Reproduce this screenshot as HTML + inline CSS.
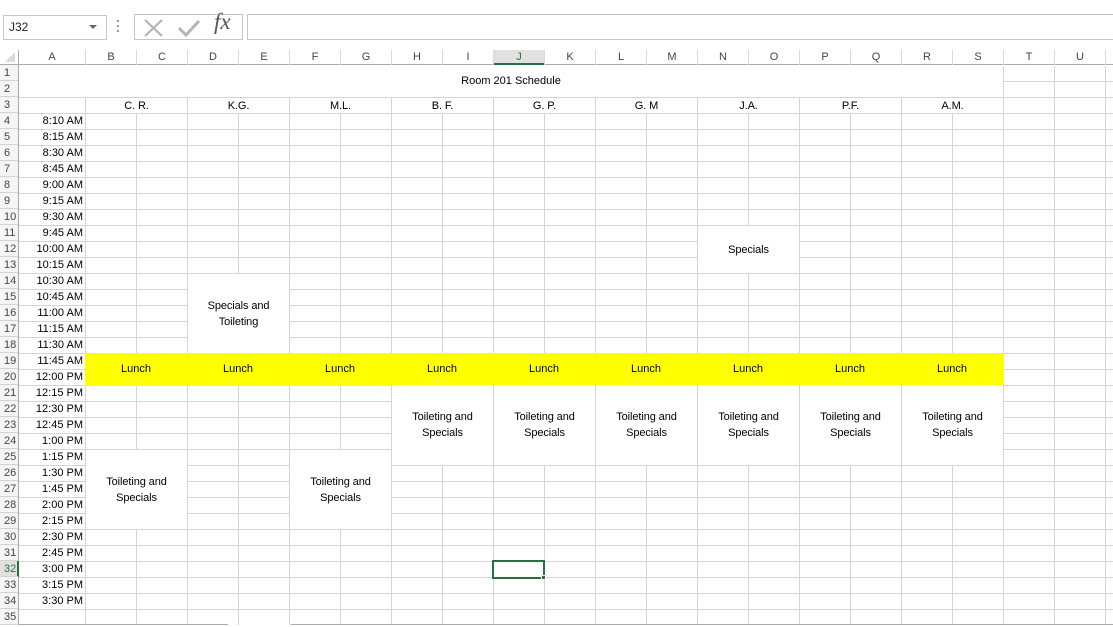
<!DOCTYPE html>
<html><head><meta charset="utf-8"><style>
*{margin:0;padding:0;box-sizing:border-box}
body{width:1113px;height:627px;background:#fff;position:relative;overflow:hidden;font-family:"Liberation Sans",Arial,sans-serif;font-size:11px;color:#000}
.a{position:absolute}
.ch{position:absolute;top:50px;height:15px;line-height:15px;text-align:center;color:#444;font-size:11px;border-right:1px solid #dadada}
.rn{position:absolute;left:0;width:19px;height:16px;line-height:16px;padding-left:4px;color:#444;font-size:11px}
.tm{position:absolute;left:19px;width:64px;height:16px;line-height:17px;text-align:right;font-size:11px}
.bx{position:absolute;background:#fff;border:1px solid #d4d4d4;display:flex;align-items:center;justify-content:center;text-align:center;line-height:16px;font-size:11px;letter-spacing:-0.1px}
.ly{position:absolute;top:353px;height:33px;line-height:33px;text-align:center;width:102px}
</style></head><body>
<div class="a" style="left:3px;top:15px;width:104px;height:25px;border:1px solid #c6c6c6"></div>
<div class="a" style="left:9px;top:15px;line-height:25px;font-size:12px;color:#222">J32</div>
<div class="a" style="left:89px;top:25px;width:0;height:0;border-left:4px solid transparent;border-right:4px solid transparent;border-top:4px solid #666"></div>
<div class="a" style="left:117px;top:20px;width:2px;height:2px;background:#999;box-shadow:0 5px 0 #999,0 10px 0 #999"></div>
<div class="a" style="left:134px;top:14px;width:109px;height:26px;border:1px solid #c6c6c6"></div>
<svg class="a" style="left:141px;top:17px" width="26" height="22"><path d="M4 3 L21 19 M21 3 L4 19" stroke="#b4b4b4" stroke-width="2.2" fill="none"/></svg>
<svg class="a" style="left:176px;top:17px" width="26" height="22"><path d="M3 11 L10 18 L23 4" stroke="#b4b4b4" stroke-width="3" fill="none"/></svg>
<div class="a" style="left:214px;top:9px;font-family:'Liberation Serif',serif;font-style:italic;font-size:23px;color:#555">fx</div>
<div class="a" style="left:247px;top:14px;width:870px;height:26px;border:1px solid #c6c6c6"></div>
<div class="a" style="left:0;top:49px;width:1113px;height:16px;border-bottom:1px solid #ababab"></div>
<div class="a" style="left:5px;top:52px;width:0;height:0;border-left:10px solid transparent;border-bottom:10px solid #dcdcdc"></div>
<div class="a" style="left:493px;top:50px;width:51px;height:15px;background:#e1e1e1;border-bottom:2px solid #217346"></div>
<div class="ch" style="left:19px;width:67px">A</div>
<div class="ch" style="left:86px;width:51px">B</div>
<div class="ch" style="left:137px;width:51px">C</div>
<div class="ch" style="left:188px;width:51px">D</div>
<div class="ch" style="left:239px;width:51px">E</div>
<div class="ch" style="left:290px;width:51px">F</div>
<div class="ch" style="left:341px;width:51px">G</div>
<div class="ch" style="left:392px;width:51px">H</div>
<div class="ch" style="left:443px;width:51px">I</div>
<div class="ch" style="left:494px;width:51px;color:#217346">J</div>
<div class="ch" style="left:545px;width:51px">K</div>
<div class="ch" style="left:596px;width:51px">L</div>
<div class="ch" style="left:647px;width:51px">M</div>
<div class="ch" style="left:698px;width:51px">N</div>
<div class="ch" style="left:749px;width:51px">O</div>
<div class="ch" style="left:800px;width:51px">P</div>
<div class="ch" style="left:851px;width:51px">Q</div>
<div class="ch" style="left:902px;width:51px">R</div>
<div class="ch" style="left:953px;width:51px">S</div>
<div class="ch" style="left:1004px;width:51px">T</div>
<div class="ch" style="left:1055px;width:51px">U</div>
<div class="a" style="left:18px;top:50px;width:1px;height:577px;background:#ababab"></div>
<div class="a" style="left:19px;top:66px;width:1094px;height:559px;background:repeating-linear-gradient(to bottom,transparent 0 15px,#d4d4d4 15px 16px)"></div>
<div class="a" style="left:35px;top:66px;width:1078px;height:559px;background:repeating-linear-gradient(to right,transparent 0 50px,#d4d4d4 50px 51px)"></div>
<div class="a" style="left:0;top:624px;width:228px;height:1px;background:#ababab"></div>
<div class="a" style="left:291px;top:624px;width:822px;height:1px;background:#ababab"></div>
<div class="a" style="left:0;top:625px;width:1113px;height:2px;background:#fff"></div>
<div class="a" style="left:0;top:65px;width:18px;height:560px;background:#f5f5f5"></div>
<div class="rn" style="top:65px">1</div><div class="rn" style="top:81px">2</div><div class="rn" style="top:97px">3</div><div class="rn" style="top:113px">4</div><div class="rn" style="top:129px">5</div><div class="rn" style="top:145px">6</div><div class="rn" style="top:161px">7</div><div class="rn" style="top:177px">8</div><div class="rn" style="top:193px">9</div><div class="rn" style="top:209px">10</div><div class="rn" style="top:225px">11</div><div class="rn" style="top:241px">12</div><div class="rn" style="top:257px">13</div><div class="rn" style="top:273px">14</div><div class="rn" style="top:289px">15</div><div class="rn" style="top:305px">16</div><div class="rn" style="top:321px">17</div><div class="rn" style="top:337px">18</div><div class="rn" style="top:353px">19</div><div class="rn" style="top:369px">20</div><div class="rn" style="top:385px">21</div><div class="rn" style="top:401px">22</div><div class="rn" style="top:417px">23</div><div class="rn" style="top:433px">24</div><div class="rn" style="top:449px">25</div><div class="rn" style="top:465px">26</div><div class="rn" style="top:481px">27</div><div class="rn" style="top:497px">28</div><div class="rn" style="top:513px">29</div><div class="rn" style="top:529px">30</div><div class="rn" style="top:545px">31</div>
<div class="rn" style="top:561px;background:#e1e1e1;color:#217346;border-right:2px solid #217346">32</div>
<div class="rn" style="top:577px">33</div><div class="rn" style="top:593px">34</div><div class="rn" style="top:609px">35</div>
<div class="a" style="left:0;top:80px;width:18px;height:545px;background:repeating-linear-gradient(to bottom,#d4d4d4 0 1px,transparent 1px 16px)"></div>
<div class="tm" style="top:113px">8:10 AM</div><div class="tm" style="top:129px">8:15 AM</div><div class="tm" style="top:145px">8:30 AM</div><div class="tm" style="top:161px">8:45 AM</div><div class="tm" style="top:177px">9:00 AM</div><div class="tm" style="top:193px">9:15 AM</div><div class="tm" style="top:209px">9:30 AM</div><div class="tm" style="top:225px">9:45 AM</div><div class="tm" style="top:241px">10:00 AM</div><div class="tm" style="top:257px">10:15 AM</div><div class="tm" style="top:273px">10:30 AM</div><div class="tm" style="top:289px">10:45 AM</div><div class="tm" style="top:305px">11:00 AM</div><div class="tm" style="top:321px">11:15 AM</div><div class="tm" style="top:337px">11:30 AM</div><div class="tm" style="top:353px">11:45 AM</div><div class="tm" style="top:369px">12:00 PM</div><div class="tm" style="top:385px">12:15 PM</div><div class="tm" style="top:401px">12:30 PM</div><div class="tm" style="top:417px">12:45 PM</div><div class="tm" style="top:433px">1:00 PM</div><div class="tm" style="top:449px">1:15 PM</div><div class="tm" style="top:465px">1:30 PM</div><div class="tm" style="top:481px">1:45 PM</div><div class="tm" style="top:497px">2:00 PM</div><div class="tm" style="top:513px">2:15 PM</div><div class="tm" style="top:529px">2:30 PM</div><div class="tm" style="top:545px">2:45 PM</div><div class="tm" style="top:561px">3:00 PM</div><div class="tm" style="top:577px">3:15 PM</div><div class="tm" style="top:593px">3:30 PM</div>
<div class="a" style="left:19px;top:66px;width:985px;height:32px;background:#fff;border-right:1px solid #d4d4d4;border-bottom:1px solid #d4d4d4;text-align:center;line-height:31px;font-size:11px">Room 201 Schedule</div>
<div class="bx" style="left:85px;top:97px;width:103px;height:17px">C. R.</div>
<div class="bx" style="left:187px;top:97px;width:103px;height:17px">K.G.</div>
<div class="bx" style="left:289px;top:97px;width:103px;height:17px">M.L.</div>
<div class="bx" style="left:391px;top:97px;width:103px;height:17px">B. F.</div>
<div class="bx" style="left:493px;top:97px;width:103px;height:17px">G. P.</div>
<div class="bx" style="left:595px;top:97px;width:103px;height:17px">G. M</div>
<div class="bx" style="left:697px;top:97px;width:103px;height:17px">J.A.</div>
<div class="bx" style="left:799px;top:97px;width:103px;height:17px">P.F.</div>
<div class="bx" style="left:901px;top:97px;width:103px;height:17px">A.M.</div>
<div class="bx" style="left:697px;top:225px;width:103px;height:49px">Specials</div>
<div class="bx" style="left:187px;top:273px;width:103px;height:81px">Specials and<br>Toileting</div>
<div class="a" style="left:85px;top:353px;width:919px;height:33px;background:#ffff00"></div>
<div class="ly" style="left:85px">Lunch</div><div class="ly" style="left:187px">Lunch</div><div class="ly" style="left:289px">Lunch</div><div class="ly" style="left:391px">Lunch</div><div class="ly" style="left:493px">Lunch</div><div class="ly" style="left:595px">Lunch</div><div class="ly" style="left:697px">Lunch</div><div class="ly" style="left:799px">Lunch</div><div class="ly" style="left:901px">Lunch</div>
<div class="bx" style="left:391px;top:385px;width:103px;height:81px;border-top:none">Toileting and<br>Specials</div>
<div class="bx" style="left:493px;top:385px;width:103px;height:81px;border-top:none">Toileting and<br>Specials</div>
<div class="bx" style="left:595px;top:385px;width:103px;height:81px;border-top:none">Toileting and<br>Specials</div>
<div class="bx" style="left:697px;top:385px;width:103px;height:81px;border-top:none">Toileting and<br>Specials</div>
<div class="bx" style="left:799px;top:385px;width:103px;height:81px;border-top:none">Toileting and<br>Specials</div>
<div class="bx" style="left:901px;top:385px;width:103px;height:81px;border-top:none">Toileting and<br>Specials</div>
<div class="bx" style="left:85px;top:449px;width:103px;height:81px">Toileting and<br>Specials</div>
<div class="bx" style="left:289px;top:449px;width:103px;height:81px">Toileting and<br>Specials</div>
<div class="a" style="left:492px;top:560px;width:53px;height:19px;border:2px solid #217346"></div>
<div class="a" style="left:541px;top:575px;width:5px;height:5px;background:#217346;border:1px solid #fff"></div>
</body></html>
